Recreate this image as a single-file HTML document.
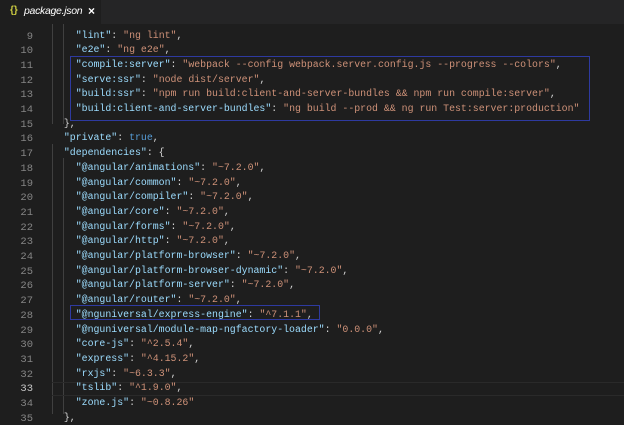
<!DOCTYPE html>
<html><head><style>
body{margin:0;width:624px;height:422px;background:#1e1e1e;overflow:hidden;position:relative;font-family:"Liberation Mono",monospace;}
.tabbar{position:absolute;left:0;top:0;width:624px;height:24px;background:#252526;}
.tab{position:absolute;left:0;top:0;width:101px;height:24px;background:#1e1e1e;font-family:"Liberation Sans",sans-serif;font-size:10.5px;}
.ln{position:absolute;left:0;width:33px;text-align:right;color:#858585;font-size:10.5px;}
.code{position:absolute;left:52px;white-space:pre;font-size:9.9px;color:#d4d4d4;}
.k{color:#9cdcfe}.s{color:#ce9178}.b{color:#569cd6}
.guide{position:absolute;width:1px;background:#404040;}
.box{position:absolute;border:1px solid #2e3aa0;}
</style></head><body>
<div class="tabbar"><div class="tab">
<span style="position:absolute;left:10px;top:5px;color:#cbcb41;font-size:10px;font-weight:bold">{}</span>
<span style="position:absolute;left:24px;top:5px;color:#fff;font-style:italic;letter-spacing:-0.3px">package.json</span>
<span style="position:absolute;left:88px;top:4px;color:#fff;font-size:12px;font-weight:bold">×</span>
</div></div>
<div class="guide" style="left:52px;top:144px;height:270px"></div>
<div class="guide" style="left:63px;top:158px;height:256px"></div>
<div class="guide" style="left:52px;top:24px;height:100px"></div>
<div class="guide" style="left:63px;top:24px;height:100px"></div>
<div style="position:absolute;left:52px;top:382px;width:572px;height:14px;border-top:1px solid #2a2a2a;border-bottom:1px solid #2a2a2a;box-sizing:border-box"></div>
<div class="box" style="left:70px;top:56px;width:518px;height:63px"></div>
<div class="box" style="left:70px;top:305px;width:248px;height:13px"></div>
<div id="c"></div>
<script>
var L=[
[9,'    <span class=k>"lint"</span>: <span class=s>"ng lint"</span>,'],
[10,'    <span class=k>"e2e"</span>: <span class=s>"ng e2e"</span>,'],
[11,'    <span class=k>"compile:server"</span>: <span class=s>"webpack --config webpack.server.config.js --progress --colors"</span>,'],
[12,'    <span class=k>"serve:ssr"</span>: <span class=s>"node dist/server"</span>,'],
[13,'    <span class=k>"build:ssr"</span>: <span class=s>"npm run build:client-and-server-bundles &amp;&amp; npm run compile:server"</span>,'],
[14,'    <span class=k>"build:client-and-server-bundles"</span>: <span class=s>"ng build --prod &amp;&amp; ng run Test:server:production"</span>'],
[15,'  },'],
[16,'  <span class=k>"private"</span>: <span class=b>true</span>,'],
[17,'  <span class=k>"dependencies"</span>: {'],
[18,'    <span class=k>"@angular/animations"</span>: <span class=s>"~7.2.0"</span>,'],
[19,'    <span class=k>"@angular/common"</span>: <span class=s>"~7.2.0"</span>,'],
[20,'    <span class=k>"@angular/compiler"</span>: <span class=s>"~7.2.0"</span>,'],
[21,'    <span class=k>"@angular/core"</span>: <span class=s>"~7.2.0"</span>,'],
[22,'    <span class=k>"@angular/forms"</span>: <span class=s>"~7.2.0"</span>,'],
[23,'    <span class=k>"@angular/http"</span>: <span class=s>"~7.2.0"</span>,'],
[24,'    <span class=k>"@angular/platform-browser"</span>: <span class=s>"~7.2.0"</span>,'],
[25,'    <span class=k>"@angular/platform-browser-dynamic"</span>: <span class=s>"~7.2.0"</span>,'],
[26,'    <span class=k>"@angular/platform-server"</span>: <span class=s>"~7.2.0"</span>,'],
[27,'    <span class=k>"@angular/router"</span>: <span class=s>"~7.2.0"</span>,'],
[28,'    <span class=k>"@nguniversal/express-engine"</span>: <span class=s>"^7.1.1"</span>,'],
[29,'    <span class=k>"@nguniversal/module-map-ngfactory-loader"</span>: <span class=s>"0.0.0"</span>,'],
[30,'    <span class=k>"core-js"</span>: <span class=s>"^2.5.4"</span>,'],
[31,'    <span class=k>"express"</span>: <span class=s>"^4.15.2"</span>,'],
[32,'    <span class=k>"rxjs"</span>: <span class=s>"~6.3.3"</span>,'],
[33,'    <span class=k>"tslib"</span>: <span class=s>"^1.9.0"</span>,'],
[34,'    <span class=k>"zone.js"</span>: <span class=s>"~0.8.26"</span>'],
[35,'  },']];
var h='';
L.forEach(function(l,i){var y=29.5+i*14.7;
h+='<div class=ln style="top:'+(y+1)+'px;'+(l[0]==33?'color:#c6c6c6':'')+'">'+l[0]+'</div>';
h+='<div class=code style="top:'+y+'px">'+l[1]+'</div>';});
document.getElementById('c').innerHTML=h;
</script>
</body></html>
